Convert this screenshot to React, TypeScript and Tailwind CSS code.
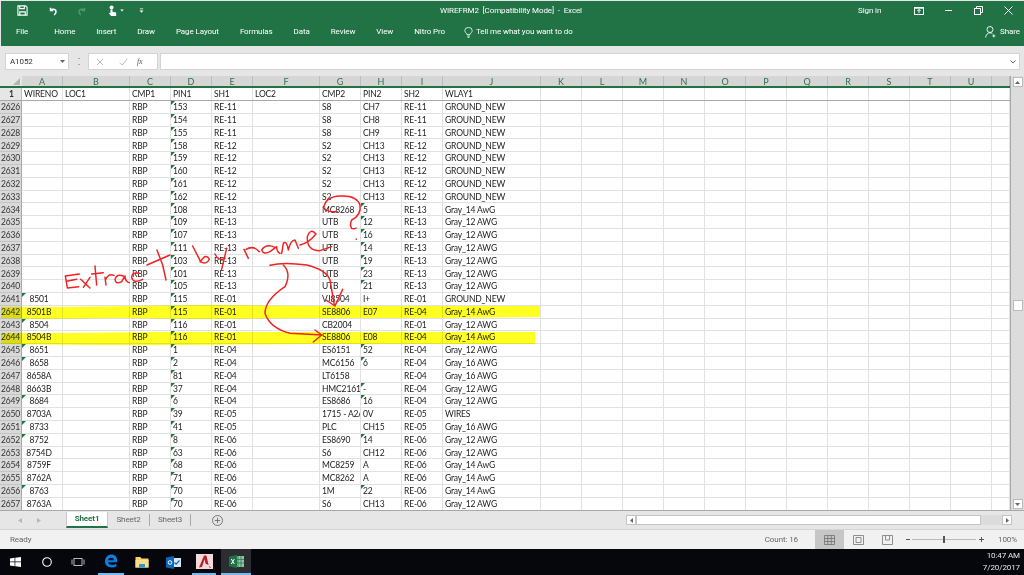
import React from "react";

const ui = "font-['Roboto','Open_Sans',sans-serif] text-[8px] tracking-[-0.1px]";
const cellFont = "font-['Lato','Liberation_Sans',sans-serif]";

type Row = [string, string, string, string, string, string, string, string, boolean, boolean];
// no, A, PIN1, SH1, CMP2, PIN2, SH2, WLAY1, triangleA, triangleH
const G = "GROUND_NEW", G14 = "Gray_14 AwG", G12 = "Gray_12 AWG", G16 = "Gray_16 AWG";
const rows: Row[] = [
  ["2626", "", "153", "RE-11", "S8", "CH7", "RE-11", G, false, false],
  ["2627", "", "154", "RE-11", "S8", "CH8", "RE-11", G, false, false],
  ["2628", "", "155", "RE-11", "S8", "CH9", "RE-11", G, false, false],
  ["2629", "", "158", "RE-12", "S2", "CH13", "RE-12", G, false, false],
  ["2630", "", "159", "RE-12", "S2", "CH13", "RE-12", G, false, false],
  ["2631", "", "160", "RE-12", "S2", "CH13", "RE-12", G, false, false],
  ["2632", "", "161", "RE-12", "S2", "CH13", "RE-12", G, false, false],
  ["2633", "", "162", "RE-12", "S2", "CH13", "RE-12", G, false, false],
  ["2634", "", "108", "RE-13", "MC8268", "5", "RE-13", G14, false, true],
  ["2635", "", "109", "RE-13", "UTB", "12", "RE-13", G12, false, true],
  ["2636", "", "107", "RE-13", "UTB", "16", "RE-13", G12, false, true],
  ["2637", "", "111", "RE-13", "UTB", "14", "RE-13", G12, false, true],
  ["2638", "", "103", "RE-13", "UTB", "19", "RE-13", G12, false, true],
  ["2639", "", "101", "RE-13", "UTB", "23", "RE-13", G12, false, true],
  ["2640", "", "105", "RE-13", "UTB", "21", "RE-13", G12, false, true],
  ["2641", "8501", "115", "RE-01", "VJ8504", "I+", "RE-01", G, true, false],
  ["2642", "8501B", "115", "RE-01", "SE8806", "E07", "RE-04", G14, false, false],
  ["2643", "8504", "116", "RE-01", "CB2004", "", "RE-01", G12, true, false],
  ["2644", "8504B", "116", "RE-01", "SE8806", "E08", "RE-04", G14, false, false],
  ["2645", "8651", "1", "RE-04", "ES6151", "52", "RE-04", G12, true, true],
  ["2646", "8658", "2", "RE-04", "MC6156", "6", "RE-04", G16, true, true],
  ["2647", "8658A", "81", "RE-04", "LT6158", "", "RE-04", G16, false, false],
  ["2648", "8663B", "37", "RE-04", "HMC2161", "-", "RE-04", G12, false, true],
  ["2649", "8684", "6", "RE-04", "ES8686", "16", "RE-04", G12, true, true],
  ["2650", "8703A", "39", "RE-05", "1715 - A2A", "0V", "RE-05", "WIRES", false, false],
  ["2651", "8733", "41", "RE-05", "PLC", "CH15", "RE-05", G16, true, false],
  ["2652", "8752", "8", "RE-06", "ES8690", "14", "RE-06", G12, true, true],
  ["2653", "8754D", "63", "RE-06", "S6", "CH12", "RE-06", G12, false, false],
  ["2654", "8759F", "68", "RE-06", "MC8259", "A", "RE-06", G14, false, false],
  ["2655", "8762A", "71", "RE-06", "MC8262", "A", "RE-06", G14, false, false],
  ["2656", "8763", "70", "RE-06", "1M", "22", "RE-06", G14, true, true],
  ["2657", "8763A", "70", "RE-06", "S6", "CH13", "RE-06", G12, false, false],
];

const letters = "ABCDEFGHIJKLMNOPQRSTU".split("").concat([""]);
const gridCols =
  "grid grid-cols-[22px_41px_67px_41px_41px_41px_67px_41px_41px_41px_98px_41px_41px_41px_41px_41px_41px_41px_41px_41px_41px_41px_18px]";

function Tri() {
  return <div className="absolute left-0 top-0 w-0 h-0 border-t-[4px] border-t-[#1b7a35] border-r-[4px] border-r-transparent" />;
}

function Cell({ text, tri, center }: { text?: string; tri?: boolean; center?: boolean }) {
  return (
    <div
      className={
        "relative flex items-center overflow-hidden whitespace-nowrap border-r border-b border-[#e1e1e1] pt-[1px] text-[8.5px] tracking-[-0.15px] leading-none text-[#222] " +
        (center ? "justify-center pr-[6px]" : "pl-[2px]")
      }
    >
      {text}
      {tri ? <Tri /> : null}
    </div>
  );
}

function DataRow({ r }: { r: Row }) {
  return (
    <div className={gridCols + " h-[12.8px]"}>
      <div className="flex items-center justify-center pt-[1px] bg-[#d9d9d9] border-r border-[#a8a8a8] border-b border-b-[#c4c4c4] text-[8.5px] tracking-[-0.2px] leading-none text-[#333]">
        {r[0]}
      </div>
      <Cell text={r[1]} tri={r[8]} center />
      <Cell />
      <Cell text="RBP" />
      <Cell text={r[2]} tri />
      <Cell text={r[3]} />
      <Cell />
      <Cell text={r[4]} />
      <Cell text={r[5]} tri={r[9]} />
      <Cell text={r[6]} />
      <Cell text={r[7]} />
      {Array(12).fill(0).map((_, i) => (
        <Cell key={i} />
      ))}
    </div>
  );
}

function Ink() {
  const p = { fill: "none", stroke: "#f02222", strokeWidth: 4.4, strokeLinecap: "round" as const, strokeLinejoin: "round" as const };
  return (
    <svg className="absolute left-0 top-0 pointer-events-none" width="1024" height="575" viewBox="0 0 1024 575">
      <g transform="translate(50 190) scale(0.3333)" {...p}>
        <path d="M88 252 L46 258 L52 294 L86 290 M50 274 L80 268" />
        <path d="M92 268 L120 294 M120 262 L100 292" />
        <path d="M135 228 L140 285 M125 252 L160 248" />
        <path d="M165 262 L168 285 M166 270 Q175 250 192 256" />
        <path d="M220 258 Q200 250 195 268 Q197 285 215 275 L225 258 Q225 275 238 278" />
        <path d="M268 250 Q246 245 245 262 Q250 282 278 268" />
        <path d="M321 180 L338 225 L348 270 M291 225 L360 195" />
        <path d="M428 168 L452 215 Q468 188 478 208 Q470 226 450 215" />
        <path d="M495 192 Q505 215 525 205 M530 175 L515 238" />
      </g>
      <g transform="translate(220 190) scale(0.3333)" {...p}>
        <path d="M72 178 L85 205 M78 178 Q100 165 118 185" />
        <path d="M165 172 Q138 160 125 180 Q130 195 150 185 L170 170 Q170 185 180 190" />
        <path d="M185 190 L190 160 Q200 150 205 180 Q212 150 225 150 L235 175" />
        <path d="M240 165 Q265 160 288 132 Q272 112 262 140 Q260 182 300 182 L335 170" />
        <path d="M312 50 Q318 20 360 18 Q410 15 420 45 Q425 75 395 90 Q388 105 395 115 Q402 118 408 114" />
        <path d="M310 52 Q322 68 352 65" />
        <path d="M408 147 L409 148" />
        <path d="M150 226 Q190 215 260 225 Q320 240 330 270 L343 345" />
        <path d="M318 330 L345 348 L368 298" />
        <path d="M190 225 Q215 250 195 290 Q135 330 135 370 Q150 415 210 430 L305 435" />
        <path d="M280 456 L305 435 L285 420" />
      </g>
    </svg>
  );
}

function Highlight() {
  return (
    <svg className="absolute left-0 top-0 pointer-events-none mix-blend-multiply" width="1024" height="575" viewBox="0 0 1024 575">
      <path
        d="M1 307 L60 307 L130 306 L210 305 L300 306 L400 306 L540 306 L540 317 L440 318 L320 318 L200 319 L120 318 L40 319 L1 318 Z"
        fill="#ffff22"
      />
      <path
        d="M1 333 L70 333 L150 332 L240 332 L320 332 L430 332 L535 332 L535 344 L430 344 L300 344 L180 345 L90 345 L1 344 Z"
        fill="#ffff22"
      />
    </svg>
  );
}

function TopIcons() {
  return (
    <>
      <svg className="ml-[16px]" width="11" height="11" viewBox="0 0 12 12" fill="none" stroke="#fff" strokeWidth="1.2">
        <path d="M1 1h8.5L11 2.5V11H1z" />
        <path d="M3 1v3h5V1M3 11V7.5h6V11" />
      </svg>
      <svg className="ml-[20px]" width="10" height="10" viewBox="0 0 12 12" fill="none" stroke="#fff" strokeWidth="1.8">
        <path d="M3 2v3.4h3.4M3.2 5.2C5 3 9.6 3.4 9.6 7c0 1.6-1 2.8-2.2 3.6" />
      </svg>
      <svg className="ml-[19px]" width="10" height="10" viewBox="0 0 12 12" fill="none" stroke="#4f9a72" strokeWidth="1.6">
        <path d="M9 2v3.4H5.6M8.8 5.2C7 3 2.4 3.4 2.4 7c0 1.6 1 2.8 2.2 3.6" />
      </svg>
      <svg className="ml-[20px]" width="11" height="12" viewBox="0 0 12 13" fill="#fff">
        <circle cx="5" cy="2.8" r="2.2" />
        <path d="M3.8 5h2.2v2.2l4 1V12H4.4L2 8.8l1.8-.4z" />
      </svg>
      <svg className="ml-[2px]" width="4" height="3" viewBox="0 0 6 4" fill="#fff">
        <path d="M0.5 0.5h5L3 3.5z" />
      </svg>
      <svg className="ml-[15px]" width="5" height="5" viewBox="0 0 6 6" fill="#fff">
        <path d="M1 0.5h4v1H1zM0.7 3h4.6L3 5.6z" />
      </svg>
    </>
  );
}

function TitleBar() {
  return (
    <div className={"h-[45px] shrink-0 bg-[#217346] text-white ml-[1px] mt-[1px] " + ui}>
      <div className="h-[19px] flex items-center">
        <TopIcons />
        <div className="ml-[296px] whitespace-nowrap leading-none w-[141px]">WIREFRM2&nbsp; [Compatibility Mode]&nbsp; -&nbsp; Excel</div>
        <div className="ml-[277px] w-[24px] leading-none whitespace-nowrap">Sign in</div>
        <svg className="ml-[32px]" width="10" height="8" viewBox="0 0 10 8" fill="none" stroke="#fff">
          <rect x="0.5" y="0.5" width="9" height="7" />
          <path d="M5 6V2.5M3.4 4L5 2.4 6.6 4" />
          <path d="M1 1.2h8" />
        </svg>
        <div className="ml-[21px] w-[7px] h-[1px] bg-white" />
        <svg className="ml-[22px]" width="9" height="9" viewBox="0 0 9 9" fill="none" stroke="#fff">
          <rect x="0.5" y="2.5" width="6" height="6" />
          <path d="M2.5 2.5v-2h6v6h-2" />
        </svg>
        <svg className="ml-[21px]" width="9" height="9" viewBox="0 0 9 9" fill="none" stroke="#fff">
          <path d="M0.5 0.5l8 8M8.5 0.5l-8 8" />
        </svg>
      </div>
      <div className="h-[26px] pb-[2px] flex items-center leading-none whitespace-nowrap">
        <span className="ml-[15px]">File</span>
        <span className="ml-[26px]">Home</span>
        <span className="ml-[21px]">Insert</span>
        <span className="ml-[21px]">Draw</span>
        <span className="ml-[21px]">Page Layout</span>
        <span className="ml-[21px]">Formulas</span>
        <span className="ml-[21px]">Data</span>
        <span className="ml-[21px]">Review</span>
        <span className="ml-[21px]">View</span>
        <span className="ml-[21px]">Nitro Pro</span>
        <svg className="ml-[19px]" width="9" height="11" viewBox="0 0 9 11" fill="none" stroke="#fff" strokeWidth="0.8">
          <path d="M2.8 7.4C2.6 6 0.8 5.4 0.8 3.6a3.7 3.2 0 0 1 7.4 0C8.2 5.4 6.4 6 6.2 7.4zM3 9h3M3.6 10.4h1.8" />
        </svg>
        <span className="ml-[3px]">Tell me what you want to do</span>
        <svg className="ml-auto" width="11" height="12" viewBox="0 0 11 12" fill="none" stroke="#fff" strokeWidth="0.9">
          <circle cx="5" cy="3.5" r="3" />
          <path d="M0.6 11.5C1 8.6 2.8 6.8 5 6.8c1 0 1.8.3 2.5.9M8.8 8.4v3M7.3 9.9h3" />
        </svg>
        <span className="ml-[4px] mr-[4px]">Share</span>
      </div>
    </div>
  );
}

function FormulaBar() {
  return (
    <div className={"h-[30px] shrink-0 flex items-center pl-[5px] pr-[4px] pt-[1px] bg-[#e6e6e6] " + ui}>
      <div className="w-[64px] h-[17px] bg-white border border-[#d4d4d4] flex items-center pl-[4px] text-[#333] leading-none">
        A1052
        <svg className="ml-auto mr-[3px]" width="5" height="3" viewBox="0 0 5 3" fill="#666">
          <path d="M0 0h5L2.5 3z" />
        </svg>
      </div>
      <div className="ml-[9px] w-[2px] h-[7px] border-y border-[#aaa]" />
      <div className="ml-[8px] w-[70px] h-[17px] bg-white border border-[#d4d4d4] flex items-center">
        <svg className="ml-[7px]" width="8" height="8" viewBox="0 0 8 8" fill="none" stroke="#b5b5b5">
          <path d="M1 1l6 6M7 1L1 7" />
        </svg>
        <svg className="ml-[15px]" width="9" height="8" viewBox="0 0 9 8" fill="none" stroke="#b5b5b5">
          <path d="M0.8 4.4L3.2 7 8.2 1" />
        </svg>
        <span className="ml-[9px] italic font-['Liberation_Serif',serif] text-[#555] text-[8px] leading-none">fx</span>
      </div>
      <div className="ml-[2px] flex-1 h-[17px] bg-white border border-[#d4d4d4] flex items-center justify-end pr-[3px]">
        <svg width="6" height="4" viewBox="0 0 6 4" fill="none" stroke="#666">
          <path d="M0.5 0.5L3 3l2.5-2.5" />
        </svg>
      </div>
    </div>
  );
}

function VScroll() {
  return (
    <div className="w-[14px] shrink-0 bg-[#dcdcdc] border-l border-[#a8a8a8] flex flex-col items-center pt-[1px]">
      <div className="w-[10px] h-[10px] bg-white border border-[#bbb] flex items-center justify-center">
        <svg width="5" height="3" viewBox="0 0 5 3" fill="#666"><path d="M0 3h5L2.5 0z" /></svg>
      </div>
      <div className="mt-[213px] w-[10px] h-[11px] bg-white border border-[#bbb]" />
      <div className="mt-auto mb-[1px] w-[10px] h-[10px] bg-white border border-[#bbb] flex items-center justify-center">
        <svg width="5" height="3" viewBox="0 0 5 3" fill="#666"><path d="M0 0h5L2.5 3z" /></svg>
      </div>
    </div>
  );
}

function Sheet() {
  return (
    <div className={"flex h-[435px] shrink-0 overflow-hidden bg-white border-b border-[#a8a8a8] " + cellFont}>
      <div className="w-[1010px] shrink-0 overflow-hidden">
        <div className={gridCols + " h-[12px] border-b-2 border-[#217346] bg-[#d6d6d6]"}>
          <div className="bg-[#e6e6e6] relative">
            <div className="absolute right-[2px] bottom-[1px] w-0 h-0 border-b-[7px] border-b-[#b5b5b5] border-l-[7px] border-l-transparent" />
          </div>
          {letters.map((l, i) => (
            <div key={i} className="flex items-center justify-center pt-[1px] border-r border-[#bdbdbd] text-[9px] leading-none text-[#2f6f50]">
              {l}
            </div>
          ))}
        </div>
        <div className={gridCols + " h-[13px] border-b border-[#a9a9a9]"}>
          <div className="flex items-center justify-center pl-[2px] pt-[1px] bg-[#e6e6e6] border-r border-[#bbb] text-[8.5px] font-bold leading-none text-[#333]">1</div>
          {["WIRENO", "LOC1", "CMP1", "PIN1", "SH1", "LOC2", "CMP2", "PIN2", "SH2", "WLAY1"].map((h) => (
            <div key={h} className="flex items-center pl-[2px] pt-[1px] border-r border-[#e1e1e1] text-[8.5px] tracking-[-0.15px] leading-none text-[#222]">
              {h}
            </div>
          ))}
          {Array(12).fill(0).map((_, i) => (
            <div key={i} className="border-r border-[#e1e1e1]" />
          ))}
        </div>
        {rows.map((r) => (
          <DataRow key={r[0]} r={r} />
        ))}
      </div>
      <VScroll />
    </div>
  );
}

function Tabs() {
  return (
    <div className={"h-[18px] shrink-0 flex items-center bg-[#e6e6e6] leading-none text-[#666] " + ui}>
      <svg className="ml-[18px]" width="4" height="5" viewBox="0 0 4 5" fill="#b8b8b8"><path d="M4 0v5L0 2.5z" /></svg>
      <svg className="ml-[15px]" width="4" height="5" viewBox="0 0 4 5" fill="#b8b8b8"><path d="M0 0v5l4-2.5z" /></svg>
      <div className="ml-[25px] w-[42px] h-[16px] mb-[1px] bg-white border-b-2 border-[#217346] border-x border-x-[#c8c8c8] flex items-center justify-center font-bold text-[#217346]">
        Sheet1
      </div>
      <div className="w-[41px] text-center">Sheet2</div>
      <div className="w-[1px] h-[12px] bg-[#aaa]" />
      <div className="w-[40px] text-center">Sheet3</div>
      <div className="w-[1px] h-[12px] bg-[#aaa]" />
      <svg className="ml-[21px]" width="11" height="11" viewBox="0 0 11 11" fill="none" stroke="#777">
        <circle cx="5.5" cy="5.5" r="5" />
        <path d="M5.5 2.8v5.4M2.8 5.5h5.4" />
      </svg>
      <div className="ml-[403px] w-[10px] h-[10px] bg-white border border-[#c4c4c4] flex items-center justify-center">
        <svg width="3" height="5" viewBox="0 0 3 5" fill="#666"><path d="M3 0v5L0 2.5z" /></svg>
      </div>
      <div className="w-[345px] h-[10px] bg-white border border-[#c4c4c4]" />
      <div className="w-[21px] h-[10px] bg-[#dcdcdc]" />
      <div className="w-[10px] h-[10px] bg-white border border-[#c4c4c4] flex items-center justify-center">
        <svg width="3" height="5" viewBox="0 0 3 5" fill="#666"><path d="M0 0v5l3-2.5z" /></svg>
      </div>
    </div>
  );
}

function Status() {
  return (
    <div className={"h-[20px] shrink-0 flex items-center bg-[#f1f1f1] border-t border-[#d4d4d4] leading-none text-[#666] " + ui}>
      <span className="ml-[10px]">Ready</span>
      <span className="ml-auto">Count: 16</span>
      <div className="ml-[17px] w-[29px] h-full bg-[#c6c6c6] flex items-center justify-center">
        <svg width="11" height="10" viewBox="0 0 11 10" fill="none" stroke="#666" strokeWidth="0.7">
          <path d="M0.5 0.5h10v9h-10zM0.5 3.5h10M0.5 6.5h10M3.8 0.5v9M7.2 0.5v9" />
        </svg>
      </div>
      <svg className="ml-[9px]" width="11" height="10" viewBox="0 0 11 10" fill="none" stroke="#777" strokeWidth="0.8">
        <path d="M0.5 0.5h10v9h-10zM3 2.5h5v5H3z" />
      </svg>
      <svg className="ml-[18px]" width="11" height="10" viewBox="0 0 11 10" fill="none" stroke="#777" strokeWidth="0.8">
        <path d="M0.5 0.5h10v9h-10zM3.5 0.5v4.5h4V0.5" />
      </svg>
      <div className="ml-[13px] w-[4px] h-[1px] bg-[#555]" />
      <div className="ml-[2px] relative w-[64px] h-[1px] bg-[#bbb]">
        <div className="absolute left-[31px] top-[-3px] w-[2px] h-[7px] bg-[#555]" />
      </div>
      <svg className="ml-[3px]" width="5" height="5" viewBox="0 0 5 5" stroke="#555"><path d="M2.5 0v5M0 2.5h5" /></svg>
      <span className="ml-[14px] w-[26px]">100%</span>
    </div>
  );
}

function Taskbar() {
  return (
    <div className={"h-[26px] shrink-0 flex bg-[#05070c] text-white " + ui}>
      <div className="w-[31px] flex items-center justify-center">
        <svg width="11" height="10" viewBox="0 0 11 10" fill="#fff">
          <path d="M0 1.5L4.6.8v3.8H0zM5.3.7L11 0v4.6H5.3zM0 5.3h4.6v3.9L0 8.5zM5.3 5.3H11V10l-5.7-.8z" />
        </svg>
      </div>
      <div className="w-[31px] flex items-center justify-center">
        <svg width="10" height="10" viewBox="0 0 10 10" fill="none" stroke="#fff" strokeWidth="1.1"><circle cx="5" cy="5" r="4.3" /></svg>
      </div>
      <div className="w-[32px] flex items-center justify-center">
        <svg width="14" height="8" viewBox="0 0 14 8" fill="none" stroke="#ccc" strokeWidth="0.9">
          <rect x="3" y="0.5" width="8" height="7" />
          <path d="M1 1.5v5M13 1.5v5" />
        </svg>
      </div>
      <div className="ml-[4px] w-[26px] flex items-center justify-center border-b-2 border-[#76b9ed]">
        <svg width="14" height="14" viewBox="0 0 14 14">
          <path d="M1 7.5C1 3 4 .6 7.5.6c3.6 0 5.8 2.6 5.8 6.6v1H4.2c.2 3 4.6 3.6 8.2 1.6v2.6C8 14.5 1 13.6 1 7.5zm3.3-1.3h5.6C9.8 3 4.7 3 4.3 6.2z" fill="#0a7ee0" />
        </svg>
      </div>
      <div className="w-[36px] flex items-center justify-center">
        <svg width="14" height="12" viewBox="0 0 14 12">
          <path d="M0.5 1h5l1 1.4h7V11.5H0.5z" fill="#f5d36b" />
          <rect x="0.5" y="4" width="13" height="7.5" fill="#fce08a" />
          <rect x="4" y="8" width="6" height="3.5" fill="#2e9ad6" />
        </svg>
      </div>
      <div className="w-[26px] flex items-center justify-center">
        <svg width="15" height="13" viewBox="0 0 15 13">
          <rect x="7" y="2" width="8" height="9" fill="#d7e7f7" />
          <path d="M8.5 6.5l1.6 1.6 3.4-3.6" fill="none" stroke="#0f5fa8" strokeWidth="1.1" />
          <path d="M0 1.5L8 0v13L0 11.5z" fill="#0a66b8" />
          <circle cx="4" cy="6.5" r="1.8" fill="none" stroke="#fff" strokeWidth="1" />
        </svg>
      </div>
      <div className="ml-[6px] w-[24px] flex items-center justify-center border-b-2 border-[#76b9ed]">
        <svg width="17" height="15" viewBox="0 0 17 15">
          <rect width="17" height="15" fill="#f4dada" />
          <path d="M3 13.5L8 1.5h2.4l2.2 9.5-3-1.2-1-4.6-2.6 7.8z" fill="#b3222a" />
          <path d="M13 12.5l1.6 1" stroke="#b3222a" />
        </svg>
      </div>
      <div className="ml-[5px] w-[30px] flex items-center justify-center bg-[#2b2d30] border-b-2 border-[#76b9ed]">
        <svg width="15" height="13" viewBox="0 0 15 13">
          <rect x="6" y="1" width="9" height="11" fill="#8fc3a4" />
          <path d="M9 1v11M12 1v11M6 4.5h9M6 8h9" stroke="#217346" strokeWidth="0.7" />
          <path d="M0 1.5L8 0v13L0 11.5z" fill="#1e7145" />
          <path d="M2.3 4l3 5M5.3 4l-3 5" stroke="#fff" strokeWidth="1" />
        </svg>
      </div>
      <div className="ml-auto mr-[4px] flex flex-col items-end justify-center gap-[4px] leading-none text-[#e6e6e6]">
        <span>10:47 AM</span>
        <span>7/20/2017</span>
      </div>
    </div>
  );
}

export default function App() {
  return (
    <div className="relative w-[1024px] h-[575px] overflow-hidden bg-[#e6e6e6] flex flex-col">
      <TitleBar />
      <FormulaBar />
      <Sheet />
      <Tabs />
      <Status />
      <Taskbar />
      <Highlight />
      <Ink />
    </div>
  );
}
